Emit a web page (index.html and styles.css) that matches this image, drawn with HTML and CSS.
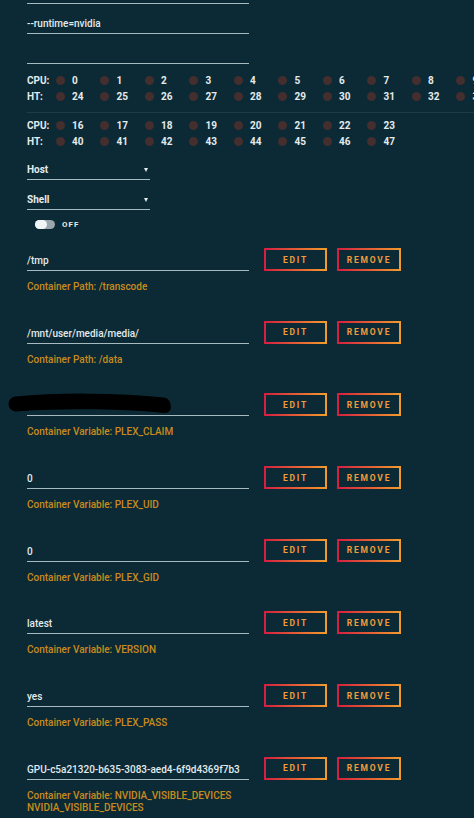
FILE: index.html
```html
<!DOCTYPE html>
<html lang="en">
<head>
  <meta charset="UTF-8" />
  <meta name="viewport" content="width=device-width, initial-scale=1.0"/>
  <title>Plex container settings</title>
  <link rel="stylesheet" href="styles.css">
</head>

<body>
  <div class="page">
    <!-- Extra parameters (previous field scrolled off the top) -->
    <div class="field field-cut"></div>
    <div class="field">--runtime=nvidia</div>
    <div class="field"></div>

    <!-- CPU pinning -->
    <div class="cpu-group">
      <div class="cpu-row">
        <span class="cpu-label">CPU:</span>
        <span class="cpu"><i class="dot"></i>0</span>
        <span class="cpu"><i class="dot"></i>1</span>
        <span class="cpu"><i class="dot"></i>2</span>
        <span class="cpu"><i class="dot"></i>3</span>
        <span class="cpu"><i class="dot"></i>4</span>
        <span class="cpu"><i class="dot"></i>5</span>
        <span class="cpu"><i class="dot"></i>6</span>
        <span class="cpu"><i class="dot"></i>7</span>
        <span class="cpu"><i class="dot"></i>8</span>
        <span class="cpu"><i class="dot"></i>9</span>
        <span class="cpu"><i class="dot"></i>10</span>
        <span class="cpu"><i class="dot"></i>11</span>
        <span class="cpu"><i class="dot"></i>12</span>
        <span class="cpu"><i class="dot"></i>13</span>
        <span class="cpu"><i class="dot"></i>14</span>
        <span class="cpu"><i class="dot"></i>15</span>
      </div>
      <div class="cpu-row">
        <span class="cpu-label">HT:</span>
        <span class="cpu"><i class="dot"></i>24</span>
        <span class="cpu"><i class="dot"></i>25</span>
        <span class="cpu"><i class="dot"></i>26</span>
        <span class="cpu"><i class="dot"></i>27</span>
        <span class="cpu"><i class="dot"></i>28</span>
        <span class="cpu"><i class="dot"></i>29</span>
        <span class="cpu"><i class="dot"></i>30</span>
        <span class="cpu"><i class="dot"></i>31</span>
        <span class="cpu"><i class="dot"></i>32</span>
        <span class="cpu"><i class="dot"></i>33</span>
        <span class="cpu"><i class="dot"></i>34</span>
        <span class="cpu"><i class="dot"></i>35</span>
        <span class="cpu"><i class="dot"></i>36</span>
        <span class="cpu"><i class="dot"></i>37</span>
        <span class="cpu"><i class="dot"></i>38</span>
        <span class="cpu"><i class="dot"></i>39</span>
      </div>
    </div>
    <div class="cpu-group cpu-group-next">
      <div class="cpu-row">
        <span class="cpu-label">CPU:</span>
        <span class="cpu"><i class="dot"></i>16</span>
        <span class="cpu"><i class="dot"></i>17</span>
        <span class="cpu"><i class="dot"></i>18</span>
        <span class="cpu"><i class="dot"></i>19</span>
        <span class="cpu"><i class="dot"></i>20</span>
        <span class="cpu"><i class="dot"></i>21</span>
        <span class="cpu"><i class="dot"></i>22</span>
        <span class="cpu"><i class="dot"></i>23</span>
      </div>
      <div class="cpu-row">
        <span class="cpu-label">HT:</span>
        <span class="cpu"><i class="dot"></i>40</span>
        <span class="cpu"><i class="dot"></i>41</span>
        <span class="cpu"><i class="dot"></i>42</span>
        <span class="cpu"><i class="dot"></i>43</span>
        <span class="cpu"><i class="dot"></i>44</span>
        <span class="cpu"><i class="dot"></i>45</span>
        <span class="cpu"><i class="dot"></i>46</span>
        <span class="cpu"><i class="dot"></i>47</span>
      </div>
    </div>

    <!-- Network / console -->
    <div class="field select">Host<span class="caret"></span></div>
    <div class="field select">Shell<span class="caret"></span></div>

    <div class="toggle-row">
      <span class="switch"></span>
      <span class="switch-text">OFF</span>
    </div>

    <!-- Paths and variables -->
    <div class="mount mount-first">
      <div class="mount-row">
        <div class="field">/tmp</div>
        <div class="btns"><span class="btn">EDIT</span><span class="btn">REMOVE</span></div>
      </div>
      <p class="mount-label">Container Path: /transcode</p>
    </div>

    <div class="mount">
      <div class="mount-row">
        <div class="field">/mnt/user/media/media/</div>
        <div class="btns"><span class="btn">EDIT</span><span class="btn">REMOVE</span></div>
      </div>
      <p class="mount-label">Container Path: /data</p>
    </div>

    <div class="mount">
      <div class="mount-row">
        <div class="field">
          <!-- redacted claim token -->
          <svg class="redact" viewBox="0 0 170 24" width="170" height="24" xmlns="http://www.w3.org/2000/svg">
            <path d="M9,11 C50,7 110,7 156,12" fill="none" stroke="#000" stroke-width="15" stroke-linecap="round"/>
            <path d="M12,12 C60,9 120,10 158,14" fill="none" stroke="#000" stroke-width="12" stroke-linecap="round"/>
          </svg>
        </div>
        <div class="btns"><span class="btn">EDIT</span><span class="btn">REMOVE</span></div>
      </div>
      <p class="mount-label">Container Variable: PLEX_CLAIM</p>
    </div>

    <div class="mount">
      <div class="mount-row">
        <div class="field">0</div>
        <div class="btns"><span class="btn">EDIT</span><span class="btn">REMOVE</span></div>
      </div>
      <p class="mount-label">Container Variable: PLEX_UID</p>
    </div>

    <div class="mount">
      <div class="mount-row">
        <div class="field">0</div>
        <div class="btns"><span class="btn">EDIT</span><span class="btn">REMOVE</span></div>
      </div>
      <p class="mount-label">Container Variable: PLEX_GID</p>
    </div>

    <div class="mount">
      <div class="mount-row">
        <div class="field">latest</div>
        <div class="btns"><span class="btn">EDIT</span><span class="btn">REMOVE</span></div>
      </div>
      <p class="mount-label">Container Variable: VERSION</p>
    </div>

    <div class="mount">
      <div class="mount-row">
        <div class="field">yes</div>
        <div class="btns"><span class="btn">EDIT</span><span class="btn">REMOVE</span></div>
      </div>
      <p class="mount-label">Container Variable: PLEX_PASS</p>
    </div>

    <div class="mount">
      <div class="mount-row">
        <div class="field">GPU-c5a21320-b635-3083-aed4-6f9d4369f7b3</div>
        <div class="btns"><span class="btn">EDIT</span><span class="btn">REMOVE</span></div>
      </div>
      <p class="mount-label">Container Variable: NVIDIA_VISIBLE_DEVICES<br/>NVIDIA_VISIBLE_DEVICES</p>
    </div>
  </div>
</body>
</html>
```

FILE: styles.css
```css
/* Reset */
* {
  margin: 0;
  padding: 0;
  box-sizing: border-box;
}
html, body {
  background: #0b2a35;
}
body {
  font-family: Roboto, "Liberation Sans", sans-serif;
  font-size: 10px;
  color: #e4ebed;
  height: 818px;
  overflow: hidden; /* cpu rows run past the right edge, as in the panel */
}
.page {
  padding-left: 27px;
}

/* Underlined text inputs */
.field {
  position: relative;
  width: 222px;
  height: 22px;
  padding: 5px 0 2px;
  line-height: 14px;
  font-weight: 500;
  border-bottom: 1px solid #a7babf;
  margin-bottom: 8px;
  white-space: nowrap;
}
.field-cut {
  margin-top: -18px;
}

/* Selects */
.select {
  width: 123px;
  font-weight: 700;
}
.caret {
  position: absolute;
  right: 2px;
  top: 10px;
  border-left: 2.5px solid transparent;
  border-right: 2.5px solid transparent;
  border-top: 4px solid #e4ebed;
}

/* CPU pinning grid */
.cpu-group {
  margin-top: 1px;
}
.cpu-group-next {
  margin-top: 7px;
  padding-top: 4px;
  border-top: 1px solid #1c3c47;
  margin-bottom: 8px;
}
.cpu-row {
  display: flex;
  align-items: center;
  height: 16.5px;
  white-space: nowrap;
  font-weight: 700;
}
.cpu-label {
  flex-shrink: 0;
  width: 28.5px;
}
.cpu {
  flex-shrink: 0;
  display: flex;
  align-items: center;
  gap: 7.5px;
  width: 44.5px;
}
.dot {
  width: 9px;
  height: 9px;
  border-radius: 50%;
  background: #442e2e;
}

/* On/off switch */
.toggle-row {
  display: flex;
  align-items: center;
  gap: 7px;
  height: 9px;
  margin-top: 9.5px;
  padding-left: 8px;
}
.switch {
  position: relative;
  width: 20px;
  height: 9px;
  border-radius: 5px;
  background: #9aa6aa;
}
.switch::before {
  content: "";
  position: absolute;
  left: 0;
  top: 0;
  width: 12px;
  height: 9px;
  border-radius: 5px;
  background: #f2f5f6;
}
.switch-text {
  font-size: 8px;
  font-weight: 700;
  letter-spacing: 1px;
  line-height: 9px;
}

/* Path / variable rows */
.mount {
  margin-bottom: 27.7px;
}
.mount-first {
  margin-top: 19.5px;
}
.mount-row {
  display: flex;
  align-items: flex-end;
  gap: 15px;
}
.mount-row .field {
  margin-bottom: 0;
}
.btns {
  display: flex;
  gap: 10px;
}
.btn {
  display: flex;
  align-items: center;
  justify-content: center;
  width: 63px;
  height: 23px;
  border: 2px solid #e05a35;
  border-image: linear-gradient(90deg, #d51f40, #f39a2c) 1;
  color: #f29b3d;
  font-size: 8.5px;
  font-weight: 700;
  letter-spacing: 1.8px;
}
.btn + .btn {
  width: 64px;
}
.mount-label {
  margin-top: 10px;
  line-height: 12px;
  font-weight: 500;
  color: #c98a1e;
}
.redact {
  position: absolute;
  left: -20.5px;
  top: -1px;
}
```
